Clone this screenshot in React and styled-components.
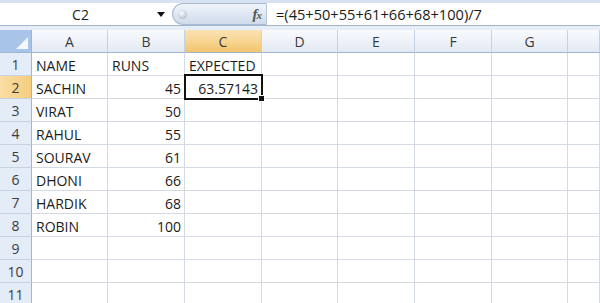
import React from "react";
import styled, { createGlobalStyle } from "styled-components";

const GlobalStyle = createGlobalStyle`
  body {
    margin: 0;
    background: #fff;
    font-family: "Open Sans", "Liberation Sans", sans-serif;
  }
`;

const Window = styled.div`
  width: 600px;
  height: 303px;
  overflow: hidden;
  background: #fff;
`;

const TopStrip = styled.div`
  height: 3px;
  background: #d6e2f1;
`;

const FormulaBar = styled.div`
  display: flex;
  height: 22px;
  border-bottom: 1px solid #a3b6cf;
  background: #fff;
`;

const NameBox = styled.div`
  display: flex;
  align-items: center;
  width: 172px;
  font-size: 14px;
  color: #222;
`;

const NameText = styled.div`
  flex: 1;
  text-align: center;
  padding-left: 4px;
`;

const DropArrow = styled.div`
  width: 0;
  height: 0;
  margin-right: 7px;
  border-left: 4px solid transparent;
  border-right: 4px solid transparent;
  border-top: 5px solid #111;
`;

const Splitter = styled.div`
  display: flex;
  align-items: center;
  justify-content: space-between;
  width: 95px;
  box-sizing: border-box;
  padding: 0 5px 0 5px;
  border: 1px solid #a9bbd3;
  border-right-color: #b8c7da;
  border-radius: 12px 0 0 12px;
  background: linear-gradient(#f1f5fb, #dde6f2 55%, #cfdbea);
`;

const Knob = styled.div`
  width: 9px;
  height: 9px;
  border-radius: 50%;
  background: radial-gradient(circle at 40% 35%, #fbfcfe, #b9c4d2 70%, #9aa7b8);
`;

const FxLabel = styled.span`
  font-family: "Liberation Serif", "DejaVu Serif", serif;
  font-style: italic;
  font-weight: bold;
  font-size: 15px;
  color: #555;
  letter-spacing: -1px;

  small {
    font-size: 11px;
  }
`;

const FormulaText = styled.div`
  flex: 1;
  display: flex;
  align-items: center;
  padding-left: 9px;
  font-size: 14.6px;
  color: #1a1a1a;
  white-space: nowrap;
`;

const GapStrip = styled.div`
  height: 4px;
  background: #e6edf6;
`;

const Sheet = styled.div`
  display: grid;
  grid-template-columns: 32px 76px 77px 77px 76px 77px 77px 76px 1fr;
  grid-auto-rows: 23px;
  font-size: 14px;
`;

const Corner = styled.div`
  position: relative;
  background: #a9c4e9;
  border-right: 1px solid #9db5d3;
  border-bottom: 1px solid #9eb6ce;

  &::after {
    content: "";
    position: absolute;
    right: 3px;
    bottom: 3px;
    width: 0;
    height: 0;
    border-left: 12px solid transparent;
    border-bottom: 12px solid #f4f7fc;
  }
`;

const ColHead = styled.div`
  display: flex;
  align-items: center;
  justify-content: center;
  color: #3c3c3c;
  border-right: 1px solid #c5d2e2;
  border-bottom: 1px solid #9eb6ce;
  background: ${(p) =>
    p.$active
      ? "linear-gradient(#fae2b3, #f7d493 50%, #f2c56d)"
      : "linear-gradient(#f8fafd, #eef2f8 50%, #e2e9f3)"};
`;

const RowHead = styled.div`
  display: flex;
  align-items: center;
  justify-content: center;
  padding-top: 1px;
  color: #3c3c3c;
  border-right: 1px solid #9eb6ce;
  border-bottom: 1px solid #c5d2e2;
  background: ${(p) =>
    p.$active ? "linear-gradient(90deg, #f9dda4, #f5cd7f)" : "#e4ecf7"};
`;

const Cell = styled.div`
  position: relative;
  display: flex;
  align-items: center;
  justify-content: ${(p) => (p.$num ? "flex-end" : "flex-start")};
  padding: 2px ${(p) => (p.$num ? "3px" : "0")} 0 ${(p) => (p.$num ? "0" : "4px")};
  color: #1c1c1c;
  white-space: nowrap;
  border-right: 1px solid #d4dae3;
  border-bottom: 1px solid #d4dae3;

  ${(p) =>
    p.$selected &&
    `
    z-index: 1;
    &::before {
      content: "";
      position: absolute;
      top: -2px;
      left: -1px;
      right: -2px;
      bottom: -2px;
      border: 2px solid #111;
    }
    &::after {
      content: "";
      position: absolute;
      right: -4px;
      bottom: -4px;
      width: 5px;
      height: 5px;
      background: #111;
      border: 1px solid #fff;
    }
  `}
`;

const columns = ["A", "B", "C", "D", "E", "F", "G", ""];

const data = [
  ["NAME", "RUNS", "EXPECTED"],
  ["SACHIN", 45, 63.57143],
  ["VIRAT", 50],
  ["RAHUL", 55],
  ["SOURAV", 61],
  ["DHONI", 66],
  ["HARDIK", 68],
  ["ROBIN", 100],
  [],
  [],
  [],
  [],
];

const App = () => {
  return (
    <Window>
      <GlobalStyle />
      <TopStrip />
      <FormulaBar>
        <NameBox>
          <NameText>C2</NameText>
          <DropArrow />
        </NameBox>
        <Splitter>
          <Knob />
          <FxLabel>
            f<small>x</small>
          </FxLabel>
        </Splitter>
        <FormulaText>=(45+50+55+61+66+68+100)/7</FormulaText>
      </FormulaBar>
      <GapStrip />
      <Sheet>
        <Corner />
        {columns.map((c, i) => (
          <ColHead key={i} $active={c === "C"}>
            {c}
          </ColHead>
        ))}
        {data.map((row, r) => (
          <React.Fragment key={r}>
            <RowHead $active={r === 1}>{r + 1}</RowHead>
            {columns.map((c, i) => {
              const v = row[i];
              return (
                <Cell
                  key={i}
                  $num={typeof v === "number"}
                  $selected={r === 1 && i === 2}
                >
                  {v}
                </Cell>
              );
            })}
          </React.Fragment>
        ))}
      </Sheet>
    </Window>
  );
};

export default App;
